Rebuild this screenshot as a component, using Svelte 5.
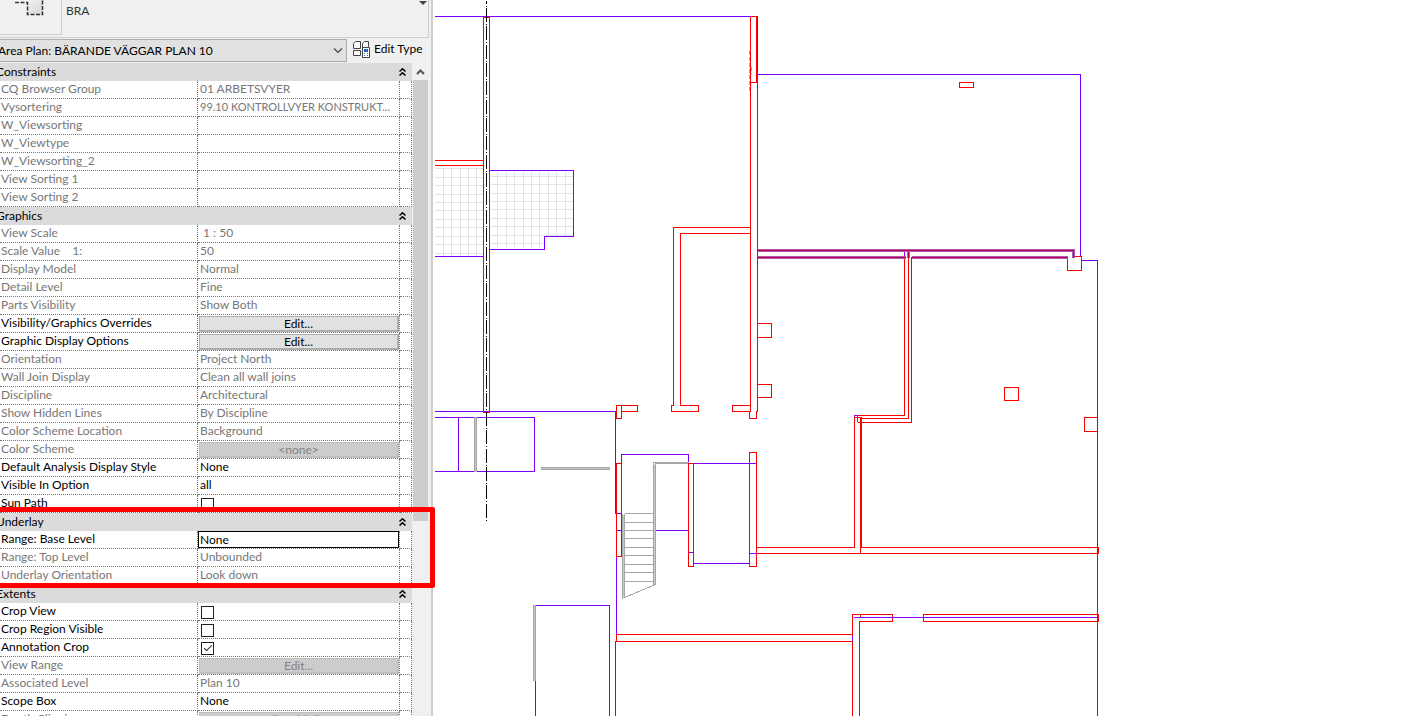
<script lang="ts">
	type Row = {
		label: string;
		value?: string;
		kind?: 'text' | 'input' | 'button' | 'check';
		off?: boolean;
		checked?: boolean;
	};

	type Group = { title: string; marked?: boolean; rows: Row[] };

	const groups: Group[] = [
		{
			title: 'Constraints',
			rows: [
				{ label: 'CQ Browser Group', value: '01 ARBETSVYER', off: true },
				{ label: 'Vysortering', value: '99.10 KONTROLLVYER KONSTRUKT...', off: true },
				{ label: 'W_Viewsorting', off: true },
				{ label: 'W_Viewtype', off: true },
				{ label: 'W_Viewsorting_2', off: true },
				{ label: 'View Sorting 1', off: true },
				{ label: 'View Sorting 2', off: true }
			]
		},
		{
			title: 'Graphics',
			rows: [
				{ label: 'View Scale', value: ' 1 : 50', off: true },
				{ label: 'Scale Value    1:', value: '50', off: true },
				{ label: 'Display Model', value: 'Normal', off: true },
				{ label: 'Detail Level', value: 'Fine', off: true },
				{ label: 'Parts Visibility', value: 'Show Both', off: true },
				{ label: 'Visibility/Graphics Overrides', value: 'Edit...', kind: 'button' },
				{ label: 'Graphic Display Options', value: 'Edit...', kind: 'button' },
				{ label: 'Orientation', value: 'Project North', off: true },
				{ label: 'Wall Join Display', value: 'Clean all wall joins', off: true },
				{ label: 'Discipline', value: 'Architectural', off: true },
				{ label: 'Show Hidden Lines', value: 'By Discipline', off: true },
				{ label: 'Color Scheme Location', value: 'Background', off: true },
				{ label: 'Color Scheme', value: '<none>', kind: 'button', off: true },
				{ label: 'Default Analysis Display Style', value: 'None' },
				{ label: 'Visible In Option', value: 'all' },
				{ label: 'Sun Path', kind: 'check' }
			]
		},
		{
			title: 'Underlay',
			marked: true,
			rows: [
				{ label: 'Range: Base Level', value: 'None', kind: 'input' },
				{ label: 'Range: Top Level', value: 'Unbounded', off: true },
				{ label: 'Underlay Orientation', value: 'Look down', off: true }
			]
		},
		{
			title: 'Extents',
			rows: [
				{ label: 'Crop View', kind: 'check' },
				{ label: 'Crop Region Visible', kind: 'check' },
				{ label: 'Annotation Crop', kind: 'check', checked: true },
				{ label: 'View Range', value: 'Edit...', kind: 'button', off: true },
				{ label: 'Associated Level', value: 'Plan 10', off: true },
				{ label: 'Scope Box', value: 'None' },
				{ label: 'Depth Clipping', value: 'Clip with line', kind: 'button', off: true }
			]
		}
	];

	// hatch lines of the two tiled floors
	const leftTileX = [443, 451, 460, 468, 476];
	const leftTileY = [168, 177, 185, 194, 202, 210, 219, 227, 236, 244, 253];
	const rightTileX = [497, 506, 514, 523, 531, 539, 548, 556, 565];
	const rightTileY = [176, 184, 193, 201, 209, 218, 226, 235, 243];
	const steps = [513, 522, 530, 538, 547, 555, 564, 572, 581];
</script>

<main>
	<aside>
		<div class="type-box">
			<div class="thumb">
				<svg width="30" height="16" viewBox="0 0 30 16" aria-hidden="true">
					<defs>
						<linearGradient id="fade" x2="1" y2="1">
							<stop offset="0" stop-color="#fff" />
							<stop offset="1" stop-color="#d4d6da" />
						</linearGradient>
					</defs>
					<path d="M0-6V2.5H12.500V14.500H27.500V-6Z" fill="url(#fade)" />
					<path d="M0 2.500H12.500V14.500H27.500V-2" fill="none" stroke="#333" stroke-width="1.500" stroke-dasharray="4 1.500" />
				</svg>
			</div>
			<span class="type-name">BRA</span>
			<svg class="drop" width="8" height="5" viewBox="0 0 8 5" aria-hidden="true"><path d="M0 1H8L4 5Z" fill="#444" /></svg>
		</div>

		<div class="filter">
			<div class="combo">
				<select aria-label="Instance">
					<option>Area Plan: BÄRANDE VÄGGAR PLAN 10</option>
				</select>
				<svg width="10" height="6" viewBox="0 0 10 6" aria-hidden="true"><path d="M1 .5 5 4.500 9 .5" fill="none" stroke="#444" stroke-width="1.200" /></svg>
			</div>
			<button class="edit-type">
				<svg width="17" height="17" viewBox="0 0 17 17" aria-hidden="true">
					<path d="M2.500.5H7.500V7.500H.5V2.500ZM9.500 7.500V2.500L11.500.5H15.500V5.500L14 7.500ZM.5 9.500H7.500V14.500H.5Z" fill="#fafafa" stroke="#444" />
					<path d="M9.500 6.500H16.500V16.500H9.500Z" fill="#fff" stroke="#444" />
					<path d="M11 8H15V11H11Z" fill="#2266b8" />
					<path d="M11 12h1v1h-1zM14 12h1v1h-1zM11 14h1v1h-1zM14 14h1v1h-1z" fill="#2266b8" />
				</svg>
				Edit Type
			</button>
		</div>

		<div class="props">
			<div class="groups">
				{#each groups as group, g}
					<section class:marked={group.marked}>
						<button class="title">
							<span>{group.title}</span>
							<svg width="7" height="8" viewBox="0 0 7 8" aria-hidden="true">
								<path d="M.5 3.500 3.500.8 6.500 3.500M.5 7.500 3.500 4.800 6.500 7.500" fill="none" stroke="#000" stroke-width="1.500" />
							</svg>
						</button>
						<table>
							<tbody>
								{#each group.rows as row, r}
									<tr class:off={row.off}>
										<th scope="row"><label for="p{g}-{r}">{row.label}</label></th>
										<td class="value">
											{#if row.kind === 'button'}
												<button id="p{g}-{r}" class="edit" disabled={row.off}>{row.value}</button>
											{:else if row.kind === 'check'}
												<input id="p{g}-{r}" type="checkbox" checked={row.checked} />
											{:else}
												<input
													id="p{g}-{r}"
													class:active={row.kind === 'input'}
													class:long={(row.value ?? '').length > 24}
													type="text"
													value={row.value ?? ''}
													disabled={row.off}
												/>
											{/if}
										</td>
										<td></td>
									</tr>
								{/each}
							</tbody>
						</table>
					</section>
				{/each}
			</div>
			<div class="scroll">
				<button aria-label="Scroll up">
					<svg width="9" height="6" viewBox="0 0 9 6" aria-hidden="true"><path d="M1 5 4.500 1.500 8 5" fill="none" stroke="#555" stroke-width="2" /></svg>
				</button>
				<div class="bar"></div>
			</div>
		</div>
	</aside>

	<svg class="plan" viewBox="433 0 978 716" preserveAspectRatio="xMinYMin meet" role="img" aria-label="Floor plan">
		<!-- pixel rows are addressed by their index, so everything sits half a unit in -->
		<g transform="translate(.5 .5)" fill="none" shape-rendering="crispEdges">
			<g stroke="#e2e2e2">
				{#each leftTileX as x}<path d="M{x} 166V256" />{/each}
				{#each leftTileY as y}<path d="M434.500 {y}H483" />{/each}
				{#each rightTileX as x}<path d="M{x} 171V{x > 544 ? 236 : 249}" />{/each}
				{#each rightTileY as y}<path d="M490 {y}H{y > 236 ? 544 : 573}" />{/each}
			</g>

			<g stroke="#7f00ff" stroke-linecap="square">
				<path d="M435 16H757V82M757 74H1080V256M1082 260H1097V716" />
				<path d="M435 256H483M490 170H573V236H544V249H490" />
				<path d="M435 411H615V513H621M435 417H534V471H435M458 417V471" />
				<path d="M621 462V454H688V462M693 463H756M616 530H621M655 530H688M688 552H693M693 563H749M749 553H756" />
				<path d="M616 557V641M615 641V716M535 680V716M535 605H609V716" />
				<path d="M904 251V257M854 418V415H857M852 634V641" />
			</g>

			<g stroke="#a6a6a6">
				<path d="M474 417V471H476V417ZM541 467H609V469H541ZM533 605V680H535V605Z" fill="#ccc" />
				<path d="M475 417V471M541 468H609M534 605V680" stroke="#c4c4c4" />
				<path d="M688 462H653V584M688 463H655V584M654 464V584M622 513V598M624 513V597" />
				<path d="M623 514V597M654 464V584" stroke="#c8c8c8" />
				{#each steps as y}<path d="M624 {y}H653" />{/each}
				<path d="M624 597 655 584" />
				<path d="M749 50V90M751 66V73" stroke-dasharray="4 2" />
			</g>

			<g stroke="#f00" stroke-linecap="square">
				<path d="M435 160H483M435 165H483M483 17H489V412H483Z" />
				<path d="M750 16V411M750 16H756V82H750M757 82V411" />
				<path d="M750 227H673V405H671V411H698V405H680V233H750M750 405H732V411H750M749 411V418H756V411" />
				<path d="M637 405H616V418H621V405M621 411H637V405" />
				<path d="M616 463H621V556H616ZM688 463H693V566H688ZM749 452H756V566H749Z" />
				<path d="M757 323H771V337H757M757 384H771V397H757M959 82H973V87H959ZM1004 387H1018V400H1004Z" />
				<path d="M1067 257V270H1081V256H1073M1097 417H1084V431H1097" />
				<path d="M904 257V415H857M908 251V418H861M911 257V422H858M857 415V421M854 417H861V547M854 417V547H757M860 418V553" />
				<path d="M861 547H1098V553H757" />
				<path d="M852 634H616V641H852M852 716V614H892V621H859V716M860 614V617M923 614H1098V621H923Z" />
			</g>

			<g stroke="#7f00ff">
				<path d="M750 16H483M853 617H1097M689 552H693M750 553H756M617 530H621M617 513H621M852 635V640M1097 614V621M1097 547V553" />
			</g>

			<g stroke="#b35ab3" stroke-width="3">
				<path d="M757 250H1073V257M757 257H905M911 257H1067M908 251V257" />
				<path d="M757 250H1073V257M757 257H905M911 257H1067M908 251V257" stroke="#b80048" stroke-width="1" />
			</g>

			<path d="M486 0V520" stroke="#000" stroke-dasharray="14 2 1 1.360" stroke-dashoffset="11" />
		</g>
	</svg>
</main>

<style>
	:global(body) {
		margin: 0;
		background: #fff;
	}

	main {
		display: flex;
		height: 100vh;
		overflow: hidden;
		font-family: Lato, 'Open Sans', 'Noto Sans', sans-serif;
		font-size: 12px;
		line-height: 16px;
		color: #000;
	}

	button,
	select,
	input {
		font: inherit;
		color: inherit;
		margin: 0;
		padding: 0;
		border: 0;
		border-radius: 0;
		box-sizing: border-box;
	}

	aside {
		flex: none;
		width: 431px;
		border-right: 2px solid #cdcdcd;
		background: #f0f0f0;
	}

	.type-box {
		display: flex;
		height: 37px;
		width: 428px;
		border: solid #cdcdcd;
		border-width: 0 1px 1px 0;
	}

	.thumb {
		width: 61px;
		height: 34px;
		border: solid #cdcdcd;
		border-width: 0 1px 1px 0;
	}

	.thumb svg {
		display: block;
		margin-left: 15px;
	}

	.type-name {
		flex: 1;
		padding: 3px 4px;
		color: #333;
	}

	.drop {
		margin-right: 1px;
	}

	.filter {
		display: flex;
		width: 428px;
		height: 25px;
		padding-top: 1px;
		box-sizing: border-box;
	}

	.combo {
		display: flex;
		align-items: center;
		width: 347px;
		height: 23px;
		box-sizing: border-box;
		border: 1px solid #adadad;
		border-left: 0;
		background: #e1e1e1;
	}

	select {
		flex: 1;
		appearance: none;
		background: none;
		text-indent: -2px;
	}

	.combo svg {
		margin-right: 3px;
	}

	.edit-type {
		display: flex;
		align-items: center;
		gap: 4px;
		height: 20px;
		margin-left: 6px;
		background: none;
		white-space: nowrap;
	}

	.props {
		display: flex;
	}

	.groups {
		width: 412px;
		background: #fff;
	}

	.marked {
		position: relative;
	}

	.marked::after {
		content: '';
		position: absolute;
		inset: -6px -23px -3px -8px;
		border: 5px solid #f00;
		border-radius: 2px;
		pointer-events: none;
	}

	.title {
		display: flex;
		align-items: center;
		justify-content: space-between;
		width: 100%;
		height: 18px;
		padding-right: 6px;
		background: #dbdbdb;
		text-indent: -4px;
	}

	table {
		width: 100%;
		table-layout: fixed;
		border-collapse: separate;
		border-spacing: 0;
	}

	th,
	td {
		height: 18px;
		padding: 0;
		box-sizing: border-box;
		border: dotted #777;
		border-width: 0 1px 1px 0;
		vertical-align: top;
	}

	th {
		width: 198px;
		padding-left: 1px;
		font-weight: 400;
		text-align: left;
		white-space: pre;
	}

	.value {
		width: 202px;
	}

	.off {
		color: #777;
	}

	label,
	td input,
	.edit {
		display: block;
	}

	input[type='text'] {
		width: 100%;
		height: 16px;
		padding-left: 2px;
		background: none;
	}

	input[type='text'].active {
		height: 17px;
		padding: 0 0 1px 1px;
		border: 1px solid #000;
		line-height: 14px;
		outline: 0;
	}

	input[type='text'].long {
		font-size: 11px;
	}

	input[type='checkbox'] {
		appearance: none;
		width: 13px;
		height: 13px;
		margin: 3px 0 0 3px;
		border: 1px solid #222;
		background: #fff;
	}

	input[type='checkbox']:checked::before {
		content: '';
		display: block;
		width: 7px;
		height: 3px;
		margin: 2px 0 0 2px;
		border: solid #222;
		border-width: 0 0 1px 1px;
		transform: rotate(-45deg);
	}

	.edit {
		width: 200px;
		height: 16px;
		margin: 1px 0 0 1px;
		border: solid #adadad;
		border-width: 1px 2px 2px 1px;
		background: #e1e1e1;
		line-height: 14px;
	}

	.edit:disabled {
		border-color: #bfbfbf;
		background: #ccc;
		color: #838383;
	}

	.scroll {
		display: flex;
		flex-direction: column;
		width: 15px;
		margin-left: 1px;
	}

	.scroll button {
		height: 17px;
		background: none;
		line-height: 0;
	}

	.bar {
		height: 441px;
		background: #cdcdcd;
	}

	.plan {
		flex: 1;
		min-width: 0;
		height: 100vh;
	}
</style>
